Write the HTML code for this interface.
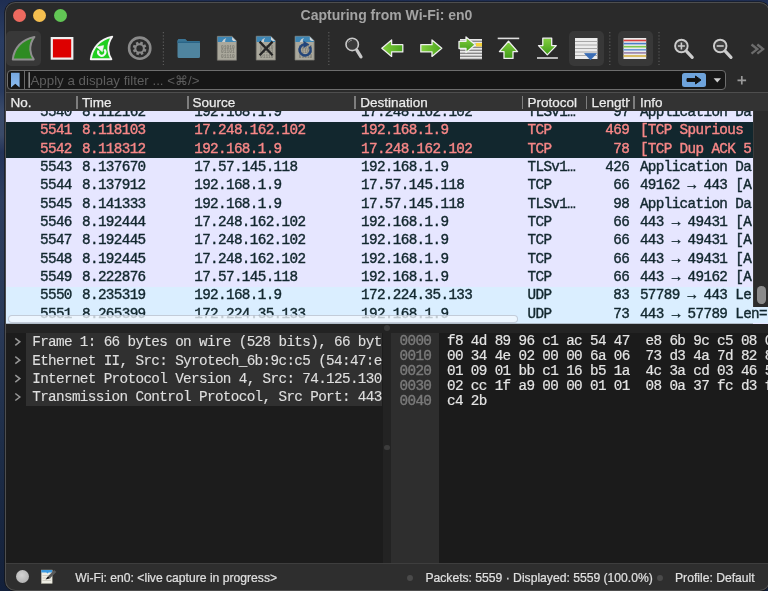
<!DOCTYPE html>
<html><head><meta charset="utf-8">
<style>
*{box-sizing:border-box;margin:0;padding:0}
html,body{width:768px;height:591px;overflow:hidden;background:#22314d;font-family:"Liberation Sans",sans-serif}
.a{position:absolute}
#desk{position:absolute;left:0;top:0;width:768px;height:591px;background:linear-gradient(180deg,#1f2e52 0px,#2a3d62 40px,#283a5e 90px,#3a4b6a 112px,#3a4a68 135px,#243459 152px,#2e3e5f 200px,#2a3a58 320px,#1d2d48 450px,#13203a 591px)}
#win{position:absolute;left:5px;top:2px;width:764.5px;height:589px;border-radius:10.5px;overflow:hidden;background:#1b1b1b}
#in{position:absolute;left:-5px;top:-2px;width:768px;height:591px;will-change:transform}
#winb{position:absolute;left:5px;top:2px;width:764.5px;height:589px;border-radius:10.5px;box-shadow:inset 0 0 0 1px #4e4e4e,0 0 0 0.6px #111;pointer-events:none}
.mono{font-family:"Liberation Mono",monospace;font-size:14.3px;letter-spacing:-0.636px;-webkit-text-stroke:0.4px currentColor}
.title{left:5px;width:763px;top:7px;text-align:center;font-weight:bold;font-size:14px;color:#a3a3a3;line-height:17px}
.tl{width:13px;height:13px;border-radius:50%;top:9px}
.hdr{left:5px;top:92px;width:765px;height:19px;background:#333;border-top:1px solid #4e4e4e}
.hc{top:0.8px;height:18px;line-height:18px;font-size:13.5px;color:#ececec;-webkit-text-stroke:0.25px #ececec;overflow:hidden;white-space:pre}
.hs{top:2.8px;width:1.7px;height:13px;background:#7e7e7e}
#list{left:6px;top:111px;width:762px;height:213px;overflow:hidden;background:#e6e6ff}
.row{position:absolute;left:0;width:762px;height:18.34px;line-height:18.34px;white-space:pre;color:#12272e}
.row span{position:absolute;top:-0.5px}
.tcp{background:#e6e6ff}
.bad{background:#12272e;color:#f78787}
.udp{background:#daeeff}
</style></head><body>
<div id="desk"></div>
<div id="win"><div id="in">
  <!-- top chrome -->
  <div class="a" style="left:0;top:0;width:768px;height:92px;background:#2a2a2a"></div>
  <div class="a title">Capturing from Wi-Fi: en0</div>
  <div class="a tl" style="left:12.6px;background:#ee6a5f"></div>
  <div class="a tl" style="left:33.1px;background:#f5bf4f"></div>
  <div class="a tl" style="left:53.5px;background:#62c655"></div>
  <!-- toolbar active bgs -->
  <div class="a" style="left:6px;top:31px;width:35px;height:35px;border-radius:5px;background:#383838"></div>
  <div class="a" style="left:569px;top:31px;width:35px;height:35px;border-radius:5px;background:#383838"></div>
  <div class="a" style="left:618px;top:31px;width:35px;height:35px;border-radius:5px;background:#383838"></div>
  <svg class="a" style="left:0;top:0" width="768" height="70" viewBox="0 0 768 70">
    <defs><filter id="bl" x="-20%" y="-20%" width="140%" height="140%"><feGaussianBlur stdDeviation="0.35"/></filter></defs>
    <!-- fin 1 -->
    <path d="M12.8,59.4 C14,48 22,39.2 34.4,36.9 C31.2,41 30.1,46 30.3,50 C30.6,54 32,57 33.7,59.4 Z" fill="#2e8b22" stroke="#8f8f8f" stroke-width="2" stroke-linejoin="round"/>
    <!-- stop -->
    <rect x="51.8" y="38.1" width="20.5" height="20.5" fill="#dd0000" stroke="#f0f0f0" stroke-width="2.2"/>
    <!-- restart fin -->
    <path d="M90.8,59.2 C92.2,48 100,39 112.2,36.7 C109,41 108,46 108.3,50 C108.6,54 110,57 111.4,59.2 Z" fill="#1fcf1f" stroke="#f4f4f4" stroke-width="1.9" stroke-linejoin="round"/>
    <path d="M98.6,50.4 A3.6,3.6 0 1 0 104.3,49.6" fill="none" stroke="#f6f6f6" stroke-width="2.1"/>
    <path d="M96.8,47 L103.6,45.6 L102.3,51.8 Z" fill="#f6f6f6" stroke="#f6f6f6" stroke-width="0.6" stroke-linejoin="round"/>
    <!-- gear -->
    <circle cx="139.7" cy="48.2" r="10.6" fill="none" stroke="#8a8a8a" stroke-width="2.6" filter="url(#bl)"/>
    <g transform="translate(139.6,48.4)" fill="#8a8a8a">
      <circle r="5.2"/>
      <g id="teeth" transform="rotate(20)">
        <rect x="-1.3" y="-6.8" width="2.6" height="13.6"/>
        <rect x="-1.3" y="-6.8" width="2.6" height="13.6" transform="rotate(45)"/>
        <rect x="-1.3" y="-6.8" width="2.6" height="13.6" transform="rotate(90)"/>
        <rect x="-1.3" y="-6.8" width="2.6" height="13.6" transform="rotate(135)"/>
      </g>
      <circle r="3.2" fill="#2a2a2a"/>
    </g>
    <!-- separators -->
    <g stroke="#5a5a5a" stroke-width="1.2" stroke-dasharray="1.2,2">
      <line x1="163.4" y1="32" x2="163.4" y2="65"/>
      <line x1="328.8" y1="32" x2="328.8" y2="65"/>
      <line x1="609.8" y1="32" x2="609.8" y2="65"/>
      <line x1="659" y1="32" x2="659" y2="65"/>
    </g>
    <!-- folder -->
    <path d="M177.5,41 q0,-2 2,-2 h5.5 l2,2 h11.5 q1.5,0 1.5,1.5 v14 q0,1.5 -1.5,1.5 h-19.5 q-1.5,0 -1.5,-1.5 Z" fill="#4f849f"/>
    <path d="M177.5,42 q0,-3 2,-3 h5.5 l2,2 h11.5 q1.5,0 1.5,1 v0.5 h-22.5 Z" fill="#3a7596"/>
    <path d="M177.5,42.3 h22.5" stroke="#2a6486" stroke-width="1.3"/>
    <!-- doc icons -->
    <g transform="translate(217.3,36.3)">
      <path d="M0,0 H14.6 L19.2,4.6 V23.9 H0 Z" fill="#aaa89c" stroke="#77766e" stroke-width="0.7"/>
      <path d="M0.4,0.4 H14.6 L18.8,4.6 V5.8 H0.4 Z" fill="#3d86b5"/>
      <path d="M14.8,0.6 L18.9,4.8 Q15.8,5.2 14.8,3.6 Z" fill="#d4d8da"/>
      <path d="M4.6,5.8 Q5.8,2.4 9,1.6 Q7.4,3.6 7.9,5.8 Z" fill="#c6ced2"/>
      <g font-family="Liberation Mono" font-size="4.5" fill="#7c7b72" font-weight="bold"><text x="3.8" y="12.6">01010</text><text x="3.8" y="17.2">01101</text><text x="3.8" y="21.8">01110</text></g>
    </g>
    <g transform="translate(256.2,36.2)">
      <path d="M0,0 H14.6 L19.2,4.6 V23.9 H0 Z" fill="#aaa89c" stroke="#77766e" stroke-width="0.7"/>
      <path d="M0.4,0.4 H14.6 L18.8,4.6 V5.8 H0.4 Z" fill="#3d86b5"/>
      <path d="M14.8,0.6 L18.9,4.8 Q15.8,5.2 14.8,3.6 Z" fill="#d4d8da"/>
      <path d="M4.6,5.8 Q5.8,2.4 9,1.6 Q7.4,3.6 7.9,5.8 Z" fill="#c6ced2"/>
      <g font-family="Liberation Mono" font-size="4.5" fill="#7c7b72" font-weight="bold"><text x="3.8" y="12.6">01010</text><text x="3.8" y="17.2">01101</text><text x="3.8" y="21.8">01110</text></g>
    </g>
    <path d="M259.6,41.6 L272.6,55.2 M272.6,41.6 L259.6,55.2" stroke="#262626" stroke-width="2.3"/>
    <g transform="translate(295,36.2)">
      <path d="M0,0 H14.6 L19.2,4.6 V23.9 H0 Z" fill="#aaa89c" stroke="#77766e" stroke-width="0.7"/>
      <path d="M0.4,0.4 H14.6 L18.8,4.6 V5.8 H0.4 Z" fill="#3d86b5"/>
      <path d="M14.8,0.6 L18.9,4.8 Q15.8,5.2 14.8,3.6 Z" fill="#d4d8da"/>
      <path d="M4.6,5.8 Q5.8,2.4 9,1.6 Q7.4,3.6 7.9,5.8 Z" fill="#c6ced2"/>
      <g font-family="Liberation Mono" font-size="4.5" fill="#7c7b72" font-weight="bold"><text x="3.8" y="12.6">01010</text><text x="3.8" y="17.2">01101</text><text x="3.8" y="21.8">01110</text></g>
    </g>
    <path d="M309.6,46.5 A5.6,5.6 0 1 1 304.6,44.3" fill="none" stroke="#24467a" stroke-width="2.5"/>
    <path d="M303.5,40.8 L309.5,44.4 L303.5,48 Z" fill="#24467a"/>
    <!-- find magnifier -->
    <defs>
      <linearGradient id="gr" x1="0" y1="0" x2="0" y2="1"><stop offset="0" stop-color="#84d040"/><stop offset="1" stop-color="#3e9a16"/></linearGradient>
      <linearGradient id="grh" x1="0" y1="0" x2="1" y2="0"><stop offset="0" stop-color="#84d040"/><stop offset="1" stop-color="#4aa41c"/></linearGradient>
    </defs>
    <circle cx="352.2" cy="44.4" r="6.2" fill="#3a3a3a" stroke="#c8c8c8" stroke-width="1.6"/>
    <path d="M348.5,42.5 q1.2,-2.2 3.5,-2.3" stroke="#9a9a9a" stroke-width="0.8" fill="none"/>
    <line x1="356.8" y1="50.2" x2="361" y2="56.8" stroke="#c8c8c8" stroke-width="3.2" stroke-linecap="round"/>
    <!-- arrows -->
    <path d="M381.8,48.2 L391.6,40 V44.7 H402.8 V51.9 H391.6 V56.4 Z" fill="url(#grh)" stroke="#eeeeee" stroke-width="1.3" stroke-linejoin="round"/>
    <path d="M441.8,48.2 L432,40 V44.7 H420.8 V51.9 H432 V56.4 Z" fill="url(#grh)" stroke="#eeeeee" stroke-width="1.3" stroke-linejoin="round"/>
    <!-- goto -->
    <g>
      <rect x="460" y="39" width="22" height="20.5" fill="#8a8a8a"/>
      <g fill="#e8e8e8">
        <rect x="460" y="39" width="22" height="1.6"/>
        <rect x="460" y="42" width="22" height="1.6"/>
        <rect x="460" y="45" width="22" height="1.6"/>
        <rect x="460" y="48" width="22" height="1.6"/>
        <rect x="460" y="51" width="22" height="1.6"/>
        <rect x="460" y="54" width="22" height="1.6"/>
        <rect x="460" y="57" width="22" height="1.6"/>
      </g>
      <rect x="476" y="43" width="6" height="3.4" fill="#f4d23a"/>
      <path d="M459,41.3 H466 V37 L475.2,44.8 L466,52.6 V48.5 H459 Z" fill="url(#gr)" stroke="#f0f0f0" stroke-width="1.3" stroke-linejoin="round"/>
    </g>
    <!-- first -->
    <line x1="497.7" y1="38.4" x2="519.2" y2="38.4" stroke="#dedede" stroke-width="1.6"/>
    <path d="M508.5,41.2 L517.6,51.6 H513 V58.4 H504 V51.6 H499.4 Z" fill="url(#gr)" stroke="#f0f0f0" stroke-width="1.3" stroke-linejoin="round"/>
    <!-- last -->
    <line x1="537" y1="58" x2="557.9" y2="58" stroke="#dedede" stroke-width="1.6"/>
    <path d="M547.3,54.9 L556.3,45.6 H551.7 V38.2 H542.8 V45.6 H538.5 Z" fill="url(#gr)" stroke="#f0f0f0" stroke-width="1.3" stroke-linejoin="round"/>
    <!-- autoscroll -->
    <g>
      <rect x="575" y="38" width="22.5" height="21" fill="#ececec"/>
      <g stroke="#a8a8a8" stroke-width="1">
        <line x1="575" y1="41.5" x2="597.5" y2="41.5"/>
        <line x1="575" y1="45" x2="597.5" y2="45"/>
        <line x1="575" y1="48.5" x2="597.5" y2="48.5"/>
        <line x1="575" y1="52" x2="597.5" y2="52"/>
        <line x1="575" y1="55.5" x2="597.5" y2="55.5"/>
      </g>
      <path d="M584.6,53.6 H596.4 L590.5,59.8 Z" fill="#3a6db5" stroke="#3a6db5" stroke-width="0.8" stroke-linejoin="round"/>
    </g>
    <!-- colorize -->
    <g>
      <rect x="623.5" y="38" width="22.7" height="21" fill="#ececec"/>
      <g stroke-width="1.6">
        <line x1="623.5" y1="40.5" x2="646.2" y2="40.5" stroke="#d84040"/>
        <line x1="623.5" y1="43.6" x2="646.2" y2="43.6" stroke="#4a7fc8"/>
        <line x1="623.5" y1="46.7" x2="646.2" y2="46.7" stroke="#7cc84a"/>
        <line x1="623.5" y1="49.8" x2="646.2" y2="49.8" stroke="#6a9ad8"/>
        <line x1="623.5" y1="52.9" x2="646.2" y2="52.9" stroke="#9a80a8"/>
        <line x1="623.5" y1="56" x2="646.2" y2="56" stroke="#d4b040"/>
      </g>
    </g>
    <!-- zoom in/out -->
    <circle cx="681.4" cy="46" r="6.3" fill="#3e3e3e" stroke="#cdcdcd" stroke-width="1.9"/>
    <path d="M677.9,46 h7 M681.4,42.5 v7" stroke="#cdcdcd" stroke-width="1.6"/>
    <line x1="686.6" y1="51.4" x2="692.2" y2="57.3" stroke="#cdcdcd" stroke-width="3.2" stroke-linecap="round"/>
    <circle cx="720.2" cy="46" r="6.3" fill="#3e3e3e" stroke="#cdcdcd" stroke-width="1.9"/>
    <path d="M716.7,46 h7" stroke="#cdcdcd" stroke-width="1.6"/>
    <line x1="725.4" y1="51.4" x2="731" y2="57.3" stroke="#cdcdcd" stroke-width="3.2" stroke-linecap="round"/>
    <!-- chevrons -->
    <path d="M751.5,44.5 l5.8,4.6 l-5.8,4.6 M757.3,44.5 l5.8,4.6 l-5.8,4.6" fill="none" stroke="#6c6c6c" stroke-width="2.3" stroke-linejoin="miter"/>
  </svg>
  <!-- filter bar -->
  <div class="a" style="left:6.5px;top:70.3px;width:719px;height:20px;border:1.2px solid #6e6e6e;border-radius:4px;background:#171717"></div>
  <div class="a" style="left:24.2px;top:71px;width:1px;height:18.5px;background:#6a6a6a"></div>
  <svg class="a" style="left:0;top:60px" width="768" height="35" viewBox="0 60 768 35">
    <defs><linearGradient id="bk" x1="0" y1="0" x2="0" y2="1"><stop offset="0" stop-color="#76a8e0"/><stop offset="1" stop-color="#8cbcf0"/></linearGradient></defs>
    <path d="M11,72.8 h8.6 v14.6 l-4.3,-3.6 l-4.3,3.6 Z" fill="url(#bk)"/>
    <rect x="28.4" y="72.2" width="1.6" height="15.6" fill="#8a8a8a"/>
    <rect x="682" y="73" width="24" height="14" rx="2.5" fill="#6ea3db"/>
    <path d="M687,78.6 h8.5 v-2.6 l5.5,4 l-5.5,4 v-2.6 h-8.5 Z" fill="#111" stroke="#111" stroke-width="1" stroke-linejoin="round"/>
    <path d="M713.6,78.2 h7.4 l-3.7,4.2 Z" fill="#d0d0d0"/>
    <path d="M737.5,80.3 h8.6 M741.8,76 v8.6" stroke="#9a9a9a" stroke-width="1.7"/>
  </svg>
  <div class="a" style="left:30.5px;top:71px;height:19px;line-height:19px;font-size:13.3px;color:#5e5e5e;white-space:pre">Apply a display filter ... &lt;⌘/&gt;</div>
  <!-- header -->
  <div class="a hdr">
    <div class="a hc" style="left:5.4px">No.</div>
    <div class="a hs" style="left:71.0px"></div>
    <div class="a hc" style="left:77px">Time</div>
    <div class="a hs" style="left:182.4px"></div>
    <div class="a hc" style="left:187.6px">Source</div>
    <div class="a hs" style="left:349.3px"></div>
    <div class="a hc" style="left:355.2px">Destination</div>
    <div class="a hs" style="left:516.7px"></div>
    <div class="a hc" style="left:522.5px">Protocol</div>
    <div class="a hs" style="left:580.7px"></div>
    <div class="a hc" style="left:586.5px;width:38.8px">Length</div>
    <div class="a hs" style="left:628.2px"></div>
    <div class="a hc" style="left:635px">Info</div>
  </div>
  <div id="list" class="a mono"><div class="row tcp" style="top:-7.59px"><span style="right:696.2px">5540</span><span style="left:76px">8.112162</span><span style="left:188.2px">192.168.1.9</span><span style="left:355px">17.248.162.102</span><span style="left:521.5px">TLSv1…</span><span style="right:138.9px">97</span><span style="left:633.9px">Application Da</span></div>
<div class="row bad" style="top:10.75px"><span style="right:696.2px">5541</span><span style="left:76px">8.118103</span><span style="left:188.2px">17.248.162.102</span><span style="left:355px">192.168.1.9</span><span style="left:521.5px">TCP</span><span style="right:138.9px">469</span><span style="left:633.9px">[TCP Spurious </span></div>
<div class="row bad" style="top:29.09px"><span style="right:696.2px">5542</span><span style="left:76px">8.118312</span><span style="left:188.2px">192.168.1.9</span><span style="left:355px">17.248.162.102</span><span style="left:521.5px">TCP</span><span style="right:138.9px">78</span><span style="left:633.9px">[TCP Dup ACK 5</span></div>
<div class="row tcp" style="top:47.43px"><span style="right:696.2px">5543</span><span style="left:76px">8.137670</span><span style="left:188.2px">17.57.145.118</span><span style="left:355px">192.168.1.9</span><span style="left:521.5px">TLSv1…</span><span style="right:138.9px">426</span><span style="left:633.9px">Application Da</span></div>
<div class="row tcp" style="top:65.77px"><span style="right:696.2px">5544</span><span style="left:76px">8.137912</span><span style="left:188.2px">192.168.1.9</span><span style="left:355px">17.57.145.118</span><span style="left:521.5px">TCP</span><span style="right:138.9px">66</span><span style="left:633.9px">49162 → 443 [A</span></div>
<div class="row tcp" style="top:84.11px"><span style="right:696.2px">5545</span><span style="left:76px">8.141333</span><span style="left:188.2px">192.168.1.9</span><span style="left:355px">17.57.145.118</span><span style="left:521.5px">TLSv1…</span><span style="right:138.9px">98</span><span style="left:633.9px">Application Da</span></div>
<div class="row tcp" style="top:102.45px"><span style="right:696.2px">5546</span><span style="left:76px">8.192444</span><span style="left:188.2px">17.248.162.102</span><span style="left:355px">192.168.1.9</span><span style="left:521.5px">TCP</span><span style="right:138.9px">66</span><span style="left:633.9px">443 → 49431 [A</span></div>
<div class="row tcp" style="top:120.79px"><span style="right:696.2px">5547</span><span style="left:76px">8.192445</span><span style="left:188.2px">17.248.162.102</span><span style="left:355px">192.168.1.9</span><span style="left:521.5px">TCP</span><span style="right:138.9px">66</span><span style="left:633.9px">443 → 49431 [A</span></div>
<div class="row tcp" style="top:139.13px"><span style="right:696.2px">5548</span><span style="left:76px">8.192445</span><span style="left:188.2px">17.248.162.102</span><span style="left:355px">192.168.1.9</span><span style="left:521.5px">TCP</span><span style="right:138.9px">66</span><span style="left:633.9px">443 → 49431 [A</span></div>
<div class="row tcp" style="top:157.47px"><span style="right:696.2px">5549</span><span style="left:76px">8.222876</span><span style="left:188.2px">17.57.145.118</span><span style="left:355px">192.168.1.9</span><span style="left:521.5px">TCP</span><span style="right:138.9px">66</span><span style="left:633.9px">443 → 49162 [A</span></div>
<div class="row udp" style="top:175.81px"><span style="right:696.2px">5550</span><span style="left:76px">8.235319</span><span style="left:188.2px">192.168.1.9</span><span style="left:355px">172.224.35.133</span><span style="left:521.5px">UDP</span><span style="right:138.9px">83</span><span style="left:633.9px">57789 → 443 Le</span></div>
<div class="row udp" style="top:194.15px"><span style="right:696.2px">5551</span><span style="left:76px">8.265399</span><span style="left:188.2px">172.224.35.133</span><span style="left:355px">192.168.1.9</span><span style="left:521.5px">UDP</span><span style="right:138.9px">73</span><span style="left:633.9px">443 → 57789 Len=</span></div></div>

  <!-- list scrollbars -->
  <div class="a" style="left:752.5px;top:111px;width:16px;height:196px;background:#2b2b2b;border-left:1px solid #3a3a3a"></div>
  <div class="a" style="left:757.3px;top:285.7px;width:8.3px;height:18.5px;border-radius:4.2px;background:#8a8a8a"></div>
  <div class="a" style="left:8px;top:314.5px;width:510px;height:8.6px;border-radius:4.3px;background:rgba(242,248,255,0.78);border:1px solid rgba(160,170,185,0.55)"></div>
  <div class="a" style="left:6px;top:322.6px;width:746.5px;height:1.6px;background:linear-gradient(180deg,#c6d2de,#9aa6b2)"></div>
  <!-- splitter -->
  <div class="a" style="left:5px;top:324px;width:765px;height:8.5px;background:#232323"></div>
  <!-- details pane -->
  <div class="a" style="left:6px;top:332.5px;width:376.5px;height:230.5px;background:#1c1c1c"></div>
  <div class="a" style="left:26.3px;top:332.7px;width:356.2px;height:73.6px;background:#303030"></div>
  <div id="det" class="a mono" style="left:32.2px;top:333.2px;width:350px;height:74px;overflow:hidden;color:#dedede;-webkit-text-stroke:0.15px #dedede;white-space:pre;line-height:18.4px">Frame 1: 66 bytes on wire (528 bits), 66 bytes captured
Ethernet II, Src: Syrotech_6b:9c:c5 (54:47:e8:6b:9c:c5)
Internet Protocol Version 4, Src: 74.125.130.188
Transmission Control Protocol, Src Port: 443</div>
  <svg class="a" style="left:0;top:330px" width="30" height="80" viewBox="0 330 30 80">
    <g fill="none" stroke="#989898" stroke-width="1.5">
      <path d="M15.3,338.3 l4.5,3.5 l-4.5,3.5"/>
      <path d="M15.3,356.7 l4.5,3.5 l-4.5,3.5"/>
      <path d="M15.3,375.1 l4.5,3.5 l-4.5,3.5"/>
      <path d="M15.3,393.5 l4.5,3.5 l-4.5,3.5"/>
    </g>
  </svg>
  <!-- vertical splitter -->
  <div class="a" style="left:382.5px;top:324px;width:8.5px;height:239px;background:#232323"></div>
  <div class="a" style="left:384px;top:325px;width:6px;height:6px;border-radius:50%;background:#3a3a3a"></div>
  <!-- hex pane -->
  <div class="a" style="left:391px;top:332.5px;width:379px;height:230.5px;background:#1b1b1b"></div>
  <div class="a" style="left:391px;top:332.5px;width:48.2px;height:230.5px;background:#2e2e2e"></div>
  <div class="a" style="left:384.2px;top:444.5px;width:5.5px;height:5.5px;border-radius:50%;background:#3c3c3c"></div>
  <div class="a mono" style="left:399.5px;top:334px;color:#7a7a7a;white-space:pre;line-height:15.1px">0000
0010
0020
0030
0040</div>
  <div class="a mono" style="left:447px;top:334px;color:#e4e4e4;-webkit-text-stroke:0.2px #e4e4e4;white-space:pre;line-height:15.1px">f8 4d 89 96 c1 ac 54 47  e8 6b 9c c5 08 00 45 00
00 34 4e 02 00 00 6a 06  73 d3 4a 7d 82 8c c0 a8
01 09 01 bb c1 16 b5 1a  4c 3a cd 03 46 5a e8 11
02 cc 1f a9 00 00 01 01  08 0a 37 fc d3 f1 2b 6e
c4 2b</div>
  <!-- status bar -->
  <div class="a" style="left:5px;top:562.5px;width:765px;height:28.5px;background:#2e2e2e;border-top:1px solid #3e3e3e"></div>
  <div class="a" style="left:15.5px;top:570.2px;width:13px;height:13px;border-radius:50%;background:radial-gradient(circle at 45% 40%,#d4d4d4,#a8a8a8)"></div>
  <svg class="a" style="left:38px;top:566px" width="20" height="20" viewBox="38 566 20 20">
    <rect x="41.3" y="570" width="10.9" height="13.5" fill="#eeede4" stroke="#a8a69a" stroke-width="0.5"/>
    <path d="M41.3,570 h10.9 v2.4 h-3.5 l-1.2,1.2 l-1.2,-1.2 h-5 Z" fill="#3b9ae0"/>
    <g stroke="#c4c2b6" stroke-width="0.7"><line x1="42.5" y1="575.5" x2="51" y2="575.5"/><line x1="42.5" y1="578" x2="51" y2="578"/><line x1="42.5" y1="580.5" x2="51" y2="580.5"/></g>
    <path d="M48,576.2 L54.2,570 L56.3,572.1 L50.1,578.3 Z" fill="#5a5a5a"/>
    <path d="M48,576.2 L50.1,578.3 L45.6,579.6 Z" fill="#111"/>
  </svg>
  <div class="a" style="left:75.3px;top:571px;line-height:15px;font-size:12.15px;color:#e0e0e0;-webkit-text-stroke:0.2px #e0e0e0;white-space:pre">Wi-Fi: en0: &lt;live capture in progress&gt;</div>
  <div class="a" style="left:407px;top:575.2px;width:6px;height:6px;border-radius:50%;background:#4a4a4a"></div>
  <div class="a" style="left:425.4px;top:571px;line-height:15px;font-size:12.15px;color:#e0e0e0;-webkit-text-stroke:0.2px #e0e0e0;white-space:pre">Packets: 5559 · Displayed: 5559 (100.0%)</div>
  <div class="a" style="left:657px;top:575.2px;width:6px;height:6px;border-radius:50%;background:#4a4a4a"></div>
  <div class="a" style="left:675px;top:571px;line-height:15px;font-size:12.15px;color:#e0e0e0;-webkit-text-stroke:0.2px #e0e0e0;white-space:pre">Profile: Default</div>
</div></div>
<div id="winb"></div>
</body></html>
